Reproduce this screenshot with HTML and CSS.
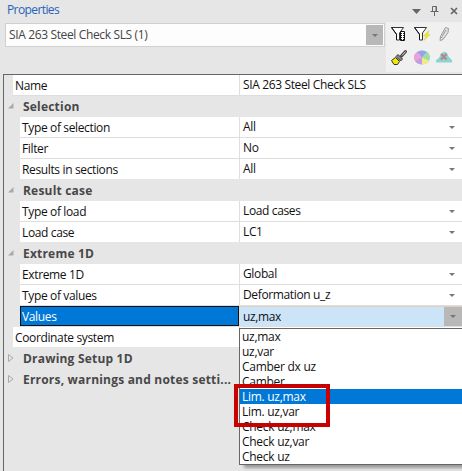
FILE: index.html
```html
<!DOCTYPE html>
<html lang="en">
<head>
<meta charset="utf-8">
<title>Properties</title>
<link rel="stylesheet" href="styles.css">
</head>
<body>
<header class="titlebar">
  <span class="title">Properties</span>
  <svg class="window-buttons" width="50" height="14" viewBox="0 0 50 14">
    <path d="M4 5h9L8.500 10z" fill="#666"/>
    <path d="M24.500 2.500h4v5h-4zM22.500 7.500h8M26.500 8v4M28 2.500v5" fill="none" stroke="#666"/>
    <path d="M43 4l6 6M49 4l-6 6" stroke="#666" stroke-width="1.700"/>
  </svg>
</header>
<section class="toolbar">
  <div class="combo"><span class="combo-text">SIA 263 Steel Check SLS (1)</span><span class="combo-button"><i class="arrow"></i></span></div>
  <div class="tools">
    <svg width="18" height="18" viewBox="0 0 18 18"><path d="M1.500 2.500h12L9.500 8v7h-3V9z" fill="#fff" stroke="#333"/><path d="M1.500 2.500l5 7v5" fill="none" stroke="#111"/><path d="M10.500 6.500h4v9h-4z" fill="#fff" stroke="#111"/><path d="M11 8.500h3.500M11 10.500h3.500M11 12.500h3.500M11 14.500h3.500" stroke="#222" stroke-dasharray="1 1"/></svg>
    <svg width="18" height="18" viewBox="0 0 18 18"><path d="M1.500 2.500h12L9.500 8v7h-3V9z" fill="#fff" stroke="#333"/><path d="M1.500 2.500l5 7v5" fill="none" stroke="#111"/><path d="M16 5.500L10.500 11H13l-2 4.500 6-6h-2.500z" fill="#f5ed00" stroke="#c9c46c" stroke-width=".5"/></svg>
    <svg width="18" height="18" viewBox="0 0 18 18"><path d="M10.500 2.500l3 1-.5 4-5 7-3 1 .5-4z" fill="#e2e2e2" stroke="#999"/><path d="M11 5L7 11.500M5.500 12l2 1" stroke="#999"/></svg>
    <svg width="18" height="18" viewBox="0 0 18 18"><path d="M15.500 2.500l-4 4.500" stroke="#444" stroke-width="3" stroke-linecap="round"/><path d="M15.500 2.500l-3.500 4" stroke="#ddd"/><path d="M8 5.500l4.500 4.500-2 2L6 7.500z" fill="#888" stroke="#333"/><path d="M5.500 8.500l4 4-2 3H4l-2.500-4z" fill="#f1e900" stroke="#333"/></svg>
    <svg width="18" height="18" viewBox="0 0 18 18"><ellipse cx="9" cy="8.500" rx="8" ry="7" fill="#9bddb0"/><path d="M9 8.500L4 3Q9 0 14 3z" fill="#9b9ff0"/><path d="M9 8.500L4 3Q-1 7 2 12z" fill="#ef9fda"/><path d="M9 8.500L2 12q2 3 7 3.500z" fill="#c49ae9"/><path d="M9 8.500v7q5 0 7-4z" fill="#f5e982"/><path d="M9 8.500l7 3q2-5-2-8.500z" fill="#9cdda9"/></svg>
    <svg width="18" height="18" viewBox="0 0 18 18"><path d="M1 13.500V11Q4 10 6 5q3-4 6-1 1 4 5 7v2.500z" fill="#8dd3cf"/><path d="M6 5l5.500 5.500M11.500 5L6 10.500" stroke="#b98386" stroke-width="2"/></svg>
  </div>
</section>
<main class="grid">
  <div class="row top"><span class="name">Name</span><span class="value">SIA 263 Steel Check SLS</span></div>
  <div class="group"><svg class="mark" width="6" height="6"><path d="M5.500 0v5.500H0z"/></svg>Selection</div>
  <div class="row"><span class="name">Type of selection</span><span class="value">All<i class="arrow"></i></span></div>
  <div class="row"><span class="name">Filter</span><span class="value">No<i class="arrow"></i></span></div>
  <div class="row last"><span class="name">Results in sections</span><span class="value">All<i class="arrow"></i></span></div>
  <div class="group"><svg class="mark" width="6" height="6"><path d="M5.500 0v5.500H0z"/></svg>Result case</div>
  <div class="row"><span class="name">Type of load</span><span class="value">Load cases<i class="arrow"></i></span></div>
  <div class="row last"><span class="name">Load case</span><span class="value">LC1<i class="arrow"></i></span></div>
  <div class="group"><svg class="mark" width="6" height="6"><path d="M5.500 0v5.500H0z"/></svg>Extreme 1D</div>
  <div class="row"><span class="name">Extreme 1D</span><span class="value">Global<i class="arrow"></i></span></div>
  <div class="row"><span class="name">Type of values</span><span class="value">Deformation u_z<i class="arrow"></i></span></div>
  <div class="row selected"><span class="name">Values</span><span class="value">uz,max<span class="drop-button"><i class="arrow"></i></span></span>
    <div class="menu">
      <div>uz,max</div><div>uz,var</div><div>Camber dx uz</div><div>Camber</div><div class="active">Lim. uz,max</div><div>Lim. uz,var</div><div>Check uz,max</div><div>Check uz,var</div><div>Check uz</div>
      <span class="callout"></span>
    </div>
  </div>
  <div class="row top last"><span class="name">Coordinate system</span><span class="value"></span></div>
  <div class="group"><svg class="mark open" width="6" height="8"><path d="M.5.500L5 4 .5 7.500z"/></svg>Drawing Setup 1D</div>
  <div class="group"><svg class="mark open" width="6" height="8"><path d="M.5.500L5 4 .5 7.500z"/></svg>Errors, warnings and notes setti...</div>
</main>
</body>
</html>
```
FILE: styles.css
```css
* { box-sizing: border-box; }
body {
  margin: 0;
  width: 462px;
  height: 471px;
  overflow: hidden;
  background: #e6e6e6;
  color: #111;
  font: 12px/20px "Open Sans", "Noto Sans", sans-serif;
  letter-spacing: -0.36px;
  white-space: nowrap;
}
.titlebar {
  height: 22px;
  padding-left: 7px;
  display: flex;
  justify-content: space-between;
}
.title { color: #2464b8; letter-spacing: -0.63px; }
.title { letter-spacing: -0.6px; }
.window-buttons { margin: 4px 4px 0 0; width: 50px; flex: none; }
.toolbar {
  height: 52px;
  display: flex;
  justify-content: space-between;
  padding-left: 5px;
}
.combo {
  width: 380px;
  height: 24px;
  margin-top: 1px;
  border: 1px solid #d0d0d0;
  background: #fdfdfd;
  color: #444;
  display: flex;
  justify-content: space-between;
  padding: 1px 1px 1px 3px;
}
.combo-button {
  width: 17px;
  height: 20px;
  background: #b8b8b8;
  display: flex;
  align-items: center;
  justify-content: center;
}
.arrow {
  width: 0;
  height: 0;
  border: solid transparent;
  border-width: 3px 3px 0;
  border-top-color: #777;
}
.tools {
  width: 76px;
  height: 50px;
  padding: 3px 0 0 4px;
  background: #f0f0f0;
  display: grid;
  grid-template-columns: repeat(3, 18px);
  grid-auto-rows: 18px;
  gap: 6px 4.5px;
}
.grid {
  height: 397px;
  margin-left: 3px;
  border-left: 1px solid #666;
  border-top: 1px solid #666;
}
.row {
  position: relative;
  height: 21px;
  margin-left: 16px;
  display: flex;
  background: #fff;
  border-bottom: 1px solid #dedede;
}
.row.last { border-bottom-color: #e6e6e6; }
.row.top { margin-left: 9px; }
.name { flex: 1; padding: 1px 0 0 2px; }
.value {
  width: 223px;
  height: 20px;
  border-left: 1px solid #dedede;
  padding: 0 7px 0 3px;
  display: flex;
  justify-content: space-between;
  align-items: center;
}
.group {
  height: 21px;
  padding-left: 4px;
  display: flex;
  color: #484848;
  font-weight: 700;
  line-height: 21px;
  letter-spacing: 0.2px;
}
.mark { flex: none; margin: 7px 9px 0 0; fill: #aaa; }
.mark.open { fill: none; stroke: #aaa; margin: 6px 9px 0 0; }
.selected .name {
  background: #0078d7;
  color: #fff;
  border: 1px solid #111;
  padding: 0 0 0 1px;
  line-height: 19px;
}
.selected .value { background: #cce4f7; padding-right: 0; border-top: 1px solid #e0d0bc; }
.drop-button {
  width: 18px;
  height: 19px;
  background: #b8b8b8;
  display: flex;
  align-items: center;
  justify-content: center;
}
.menu {
  position: absolute;
  z-index: 1;
  top: 22px;
  left: 219px;
  width: 223px;
  height: 137px;
  background: #fff;
  border: 1px solid #666;
  border-right: 0;
  line-height: 15px;
  letter-spacing: -0.28px;
  box-shadow: 5px 3px 3px #999;
}
.menu div { height: 15px; padding-left: 2px; }
.menu .active { background: #0078d7; color: #fff; }
.callout {
  position: absolute;
  top: 55px;
  left: -6px;
  width: 96px;
  height: 43px;
  border: 4px solid #c80000;
}
```
